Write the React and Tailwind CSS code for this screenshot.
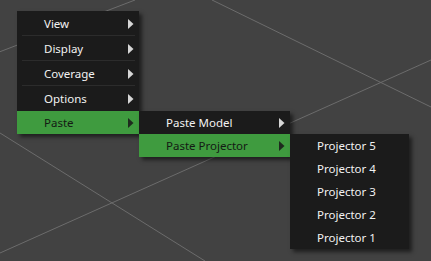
import React from 'react';

const Arrow = ({ dark }) => (
  <svg width="6" height="10" viewBox="0 0 6 10" className="shrink-0">
    <path d="M0 0 L5.5 5 L0 10 Z" fill={dark ? '#1e2a1e' : '#d6d6d6'} />
  </svg>
);

const Item = ({ label, active, arrow, sep, h = 'h-[25px]', children }) => (
  <div className={`relative flex items-center pl-[27px] pr-[5px] ${h} ${active ? 'bg-[#3f9b3f] text-[#141a14]' : 'text-[#f2f2f2]'}`}>
    <span className="flex-1 leading-none">{label}</span>
    {arrow && <Arrow dark={active} />}
    {sep && <div className="absolute bottom-0 left-[5px] right-[4px] h-px bg-[#2c2c2c]" />}
    {children}
  </div>
);

const menu = 'bg-[#1b1b1b] shadow-[3px_3px_4px_rgba(0,0,0,0.55)] flex flex-col';

const App = () => {
  return (
    <div
      className="relative w-[431px] h-[261px] overflow-hidden bg-[#424242] text-[11.5px]"
      style={{ fontFamily: '"Noto Sans", "Open Sans", sans-serif' }}
    >
      {/* viewport grid lines */}
      <svg className="absolute inset-0" width="431" height="261">
        <g stroke="#6c6c6c" strokeWidth="1" fill="none">
          <line x1="0" y1="51.7" x2="135" y2="0" />
          <line x1="212" y1="0" x2="431" y2="107" />
          <line x1="431" y1="60" x2="0" y2="253" />
          <line x1="0" y1="133" x2="205" y2="261" />
        </g>
      </svg>

      {/* context menu */}
      <div className={`absolute left-[17px] top-[11px] w-[122px] ${menu}`}>
        <Item label="View" arrow sep />
        <Item label="Display" arrow sep />
        <Item label="Coverage" arrow sep />
        <Item label="Options" arrow />
        <Item label="Paste" arrow active h="h-[23px]">
          <div className={`absolute left-full top-0 w-[151px] ${menu}`}>
            <Item label="Paste Model" arrow h="h-[23px]" />
            <Item label="Paste Projector" arrow active h="h-[23px]">
              <div className={`absolute left-full top-0 w-[119px] ${menu}`}>
                {['Projector 5', 'Projector 4', 'Projector 3', 'Projector 2', 'Projector 1'].map((p) => (
                  <Item key={p} label={p} h="h-[23px]" />
                ))}
              </div>
            </Item>
          </div>
        </Item>
      </div>
    </div>
  );
};

export default App;
